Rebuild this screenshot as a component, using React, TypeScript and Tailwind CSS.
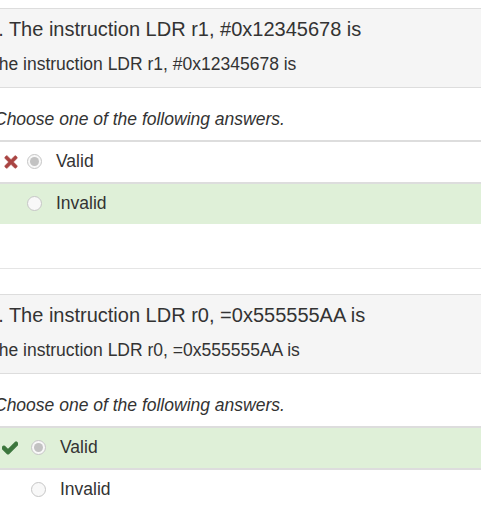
import { FaCheck, FaTimes } from 'react-icons/fa';

type Answer = {
  label: string;
  checked: boolean;
  correct: boolean;
  mark?: 'right' | 'wrong';
};

interface QuestionProps {
  number: number;
  text: string;
  slot: string;
  answers: Answer[];
}

function Radio({ checked }: { checked: boolean }) {
  return (
    <span className="flex h-[15px] w-[15px] shrink-0 items-center justify-center rounded-full border border-[#c6c6c6] bg-[#f8f8f8]">
      {checked && <span className="h-[9px] w-[9px] rounded-full bg-[#c2c2c2]" />}
    </span>
  );
}

function Question({ number, text, slot, answers }: QuestionProps) {
  return (
    <section>
      <div className="border-y border-[#ddd] bg-[#f5f5f5] pt-[9px] pb-[10px]">
        <h4 className="text-[20px] leading-[22px]">
          {number}. {text}
        </h4>
        <p className="mt-3 pl-[1px] text-[17.5px] leading-[25px]">{text}</p>
      </div>
      <p className="pt-[19px] pb-[8px] pl-[7px] text-[17.5px] leading-[25px] italic">
        Choose one of the following answers.
      </p>
      <div>
        {answers.map((a) => (
          <div
            key={a.label}
            className={`flex h-[42px] items-center border-t-2 border-[#ddd] pl-[15px] pb-[1px] text-[17.5px] ${
              a.correct ? 'bg-[#dff0d8]' : 'bg-white'
            }`}
          >
            <span className={`flex shrink-0 items-center ${slot}`}>
              {a.mark === 'wrong' && (
                <FaTimes className="text-[#a94442]" size={18} stroke="currentColor" strokeWidth={20} />
              )}
              {a.mark === 'right' && (
                <FaCheck className="text-[#3c763d]" size={16} stroke="currentColor" strokeWidth={40} />
              )}
            </span>
            <Radio checked={a.checked} />
            <span className="ml-[14px]">{a.label}</span>
          </div>
        ))}
      </div>
    </section>
  );
}

export default function App() {
  return (
    <div className="min-h-screen overflow-hidden bg-white pt-2 font-['Liberation_Sans',Arial,sans-serif] text-[#333]">
      <div className="ml-[-13px]">
        <Question
          number={1}
          text="The instruction LDR r1, #0x12345678 is"
          slot="w-[25px]"
          answers={[
            { label: 'Valid', checked: true, correct: false, mark: 'wrong' },
            { label: 'Invalid', checked: false, correct: true },
          ]}
        />
        <div className="mt-[44px] mb-[25px] border-t border-[#e5e5e5]" />
        <Question
          number={2}
          text="The instruction LDR r0, =0x555555AA is"
          slot="w-[29px]"
          answers={[
            { label: 'Valid', checked: true, correct: true, mark: 'right' },
            { label: 'Invalid', checked: false, correct: false },
          ]}
        />
      </div>
    </div>
  );
}
